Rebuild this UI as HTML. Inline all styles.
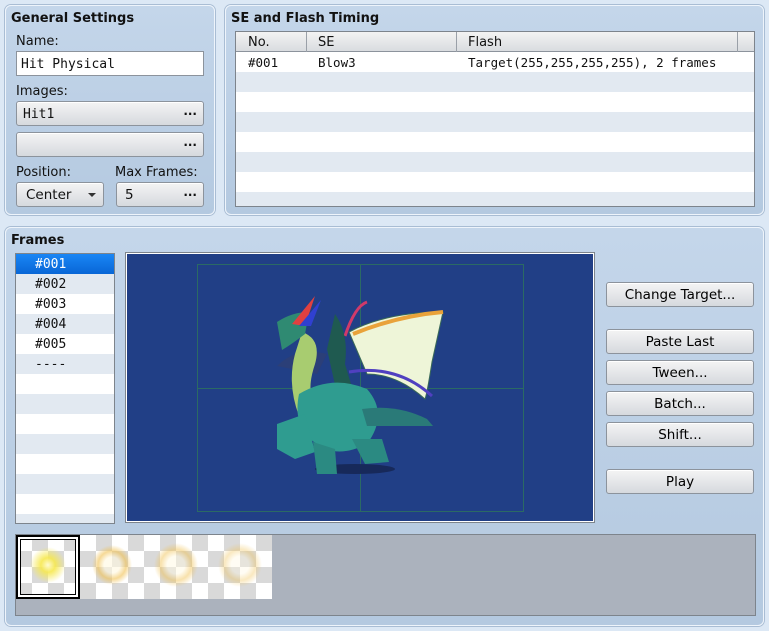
<!DOCTYPE html>
<html><head><meta charset="utf-8"><style>
*{box-sizing:border-box;margin:0;padding:0}
body{width:769px;height:631px;background:#dce8f5;font-family:"DejaVu Sans","Liberation Sans",sans-serif;font-size:13px;color:#111;position:relative;overflow:hidden}
.a{position:absolute}
.panel{position:absolute;background:linear-gradient(#c4d6ea,#b4c9e0);border:1px solid #eef4fb;border-radius:6px;box-shadow:0 0 0 1px #a9bdd4}
.h{font-weight:bold;font-size:13px}
.mono{font-family:"DejaVu Sans Mono","Liberation Mono",monospace;font-size:12.5px}
.btn{position:absolute;background:linear-gradient(#f4f4f4,#d6d9de);border:1px solid #8c939c;border-radius:3px;box-shadow:inset 0 1px 0 #fff}
.cbtn{text-align:center;line-height:24px;font-size:13.5px;color:#000}
.dots{position:absolute;right:6px;top:5px;font-size:12px;font-weight:bold}
.row{position:absolute;left:0;right:0;height:20px;line-height:21px}
.l{background:#e2e9f1}.w{background:#fff}
</style></head><body>
<div class="panel" style="left:5px;top:5px;width:210px;height:210px"></div>
<div class="panel" style="left:225px;top:5px;width:539px;height:210px"></div>
<div class="panel" style="left:5px;top:227px;width:759px;height:399px"></div>

<div class="a h" style="left:11px;top:11px">General Settings</div>
<div class="a" style="left:16px;top:34px">Name:</div>
<div class="a mono" style="left:16px;top:51px;width:188px;height:25px;background:#fff;border:1px solid #8c939c;padding:5px 4px;font-size:13px">Hit Physical</div>
<div class="a" style="left:16px;top:84px">Images:</div>
<div class="btn" style="left:16px;top:101px;width:188px;height:25px"><span class="a mono" style="left:6px;top:5px;font-size:13px">Hit1</span><span class="dots">···</span></div>
<div class="btn" style="left:16px;top:132px;width:188px;height:25px"><span class="dots">···</span></div>
<div class="a" style="left:16px;top:165px">Position:</div>
<div class="a" style="left:115px;top:165px">Max Frames:</div>
<div class="btn" style="left:16px;top:182px;width:88px;height:25px"><span class="a" style="left:9px;top:4px;font-size:13.5px">Center</span><span class="a" style="right:7px;top:10px;border-left:4px solid transparent;border-right:4px solid transparent;border-top:4px solid #333"></span></div>
<div class="btn" style="left:116px;top:182px;width:88px;height:25px"><span class="a" style="left:8px;top:4px;font-size:13.5px">5</span><span class="dots">···</span></div>

<div class="a h" style="left:231px;top:11px">SE and Flash Timing</div>
<div class="a" style="left:235px;top:31px;width:520px;height:176px;background:#fff;border:1px solid #7d848c;overflow:hidden">
 <div class="row" style="top:0;background:linear-gradient(#f3f3f3,#d9dce0);border-bottom:1px solid #8c939c;height:20px;line-height:21px">
  <span class="a" style="left:12px">No.</span><span class="a" style="left:70px;top:0;height:20px;border-left:1px solid #9aa0a8"></span>
  <span class="a" style="left:82px">SE</span><span class="a" style="left:220px;top:0;height:20px;border-left:1px solid #9aa0a8"></span>
  <span class="a" style="left:232px">Flash</span><span class="a" style="left:501px;top:0;height:20px;border-left:1px solid #9aa0a8"></span>
 </div>
 <div class="row w mono" style="top:20px"><span class="a" style="left:12px">#001</span><span class="a" style="left:82px">Blow3</span><span class="a" style="left:232px">Target(255,255,255,255), 2 frames</span></div>
 <div class="row l" style="top:40px"></div><div class="row w" style="top:60px"></div>
 <div class="row l" style="top:80px"></div><div class="row w" style="top:100px"></div>
 <div class="row l" style="top:120px"></div><div class="row w" style="top:140px"></div>
 <div class="row l" style="top:160px"></div>
</div>

<div class="a h" style="left:11px;top:233px">Frames</div>
<div class="a mono" style="left:15px;top:253px;width:100px;height:271px;background:#fff;border:1px solid #7d848c;overflow:hidden;font-size:13px">
 <div class="row" style="top:0;background:linear-gradient(#1a86f5,#0866d6);color:#fff;padding-left:19px">#001</div>
 <div class="row l" style="top:20px;padding-left:19px">#002</div>
 <div class="row w" style="top:40px;padding-left:19px">#003</div>
 <div class="row l" style="top:60px;padding-left:19px">#004</div>
 <div class="row w" style="top:80px;padding-left:19px">#005</div>
 <div class="row l" style="top:100px;padding-left:19px">----</div>
 <div class="row l" style="top:140px"></div><div class="row l" style="top:180px"></div>
 <div class="row l" style="top:220px"></div><div class="row l" style="top:260px"></div>
</div>

<div class="a" style="left:125px;top:252px;width:470px;height:271px;background:#fff;border:1px solid #7d848c;padding:1px">
<svg width="466" height="267" style="display:block">
<rect width="466" height="267" fill="#213f86"/>
<rect x="70.5" y="10.5" width="326" height="247" fill="none" stroke="#2b6a64"/>
<line x1="233.5" y1="10" x2="233.5" y2="258" stroke="#2b6a64"/>
<line x1="70" y1="134.5" x2="397" y2="134.5" stroke="#2b6a64"/>
<ellipse cx="228" cy="215" rx="40" ry="5" fill="#17295a"/>
<path d="M222 78 Q260 58 316 58 L305 108 Q300 140 298 145 Q270 120 240 120 Z" fill="#eef5d8" stroke="#3a6a58"/>
<path d="M218 82 Q228 52 240 48" stroke="#d03a6a" stroke-width="3" fill="none"/>
<path d="M226 80 Q270 62 316 58" stroke="#e9a23a" stroke-width="4" fill="none"/>
<path d="M222 118 Q270 110 305 142" stroke="#5040c0" stroke-width="3" fill="none"/>
<path d="M208 60 Q222 80 218 110 L230 150 L210 140 L200 95 Z" fill="#1f5a50"/>
<path d="M150 112 Q170 92 200 100 L190 120 Z" fill="#2b3f78"/>
<path d="M175 78 Q195 85 188 110 Q178 140 190 150 L172 162 Q160 130 168 100 Z" fill="#a8cc70"/>
<path d="M172 140 Q205 120 240 135 Q262 160 240 190 Q210 205 190 190 Q165 175 172 140Z" fill="#2f9c90"/>
<path d="M235 155 Q270 150 300 165 L306 172 Q270 172 240 172Z" fill="#2a7a78"/>
<path d="M150 170 L178 160 L188 198 L168 205 L150 195 Z" fill="#2f9c90"/>
<path d="M186 188 L208 195 L210 220 L190 220 Z" fill="#2b8a82"/>
<path d="M225 185 L255 185 L262 208 L238 210Z" fill="#2b8a82"/>
<path d="M150 68 Q165 58 182 58 L178 80 Q165 90 155 96Z" fill="#2f8a72"/>
<path d="M165 70 L188 42 L178 72Z" fill="#e04040"/>
<path d="M172 72 L194 46 L184 72Z" fill="#3040d0"/>
</svg></div>

<div class="btn cbtn" style="left:606px;top:282px;width:148px;height:25px">Change Target...</div>
<div class="btn cbtn" style="left:606px;top:329px;width:148px;height:25px">Paste Last</div>
<div class="btn cbtn" style="left:606px;top:360px;width:148px;height:25px">Tween...</div>
<div class="btn cbtn" style="left:606px;top:391px;width:148px;height:25px">Batch...</div>
<div class="btn cbtn" style="left:606px;top:422px;width:148px;height:25px">Shift...</div>
<div class="btn cbtn" style="left:606px;top:469px;width:148px;height:25px">Play</div>

<div class="a" style="left:15px;top:534px;width:741px;height:82px;background:#abb2bd;border:1px solid #7d848c"></div>
<div class="a" style="left:16px;top:535px;width:256px;height:64px;background-color:#fff;background-image:linear-gradient(45deg,#d9d9d9 25%,transparent 25%,transparent 75%,#d9d9d9 75%),linear-gradient(45deg,#d9d9d9 25%,transparent 25%,transparent 75%,#d9d9d9 75%);background-size:32px 32px;background-position:0 0,16px 16px"></div>
<svg class="a" style="left:16px;top:535px" width="256" height="64">
<defs><radialGradient id="g"><stop offset="0" stop-color="#fffbd0"/><stop offset=".4" stop-color="#f6e850" stop-opacity=".9"/><stop offset="1" stop-color="#f6e850" stop-opacity="0"/></radialGradient>
<radialGradient id="r"><stop offset=".4" stop-color="#fff8e0" stop-opacity=".6"/><stop offset=".7" stop-color="#f0c050" stop-opacity=".6"/><stop offset="1" stop-color="#f0c050" stop-opacity="0"/></radialGradient></defs>
<circle cx="32" cy="30" r="18" fill="url(#g)"/>
<circle cx="96" cy="30" r="20" fill="url(#r)"/>
<circle cx="160" cy="30" r="22" fill="url(#r)" opacity=".8"/>
<circle cx="224" cy="30" r="22" fill="url(#r)" opacity=".6"/>
</svg>
<div class="a" style="left:16px;top:535px;width:64px;height:64px;border:2px solid #000;box-shadow:inset 0 0 0 2px #fff,inset 0 0 0 3px #000"></div>
</body></html>
